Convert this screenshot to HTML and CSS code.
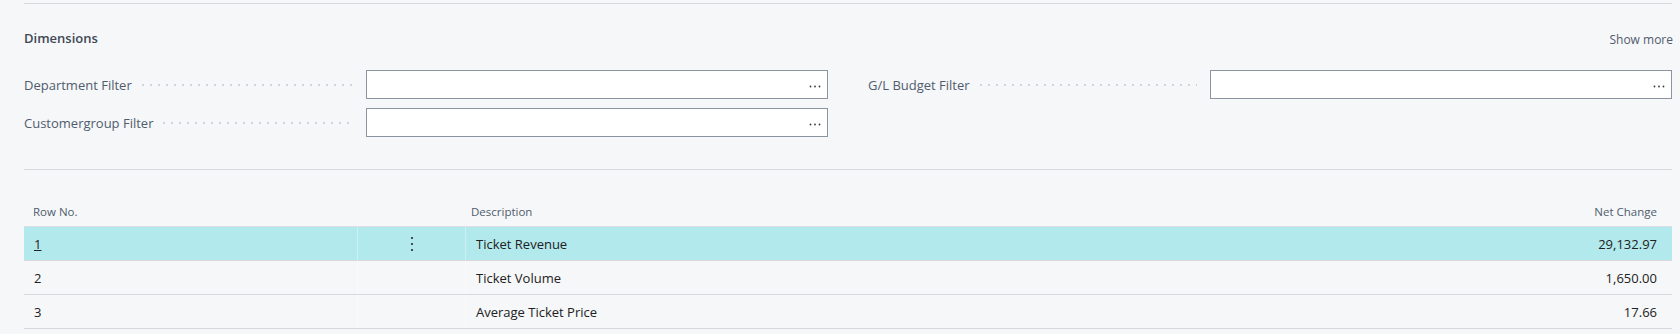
FILE: index.html
```html
<!DOCTYPE html>
<html lang="en">
	<head>
		<meta charset="UTF-8" />
		<meta name="viewport" content="width=device-width, initial-scale=1.0" />
		<title>Account Schedule - Dimensions</title>
		<link rel="stylesheet" href="styles.css">
	</head>
	<body>
		<div class="page">
			<section class="dimensions">
				<div class="section-header">
					<h2 class="section-title">Dimensions</h2>
					<a class="show-more" href="#">Show more</a>
				</div>
				<div class="field-columns">
					<div class="field-column">
						<div class="field">
							<label class="field-label" for="department_filter"><span>Department Filter</span><span class="leader"></span></label>
							<div class="field-input">
								<input type="text" id="department_filter" />
								<span class="lookup"><svg width="12" height="3" viewBox="0 0 12 3"><circle cx="1.5" cy="1.5" r="0.9" /><circle cx="6" cy="1.5" r="0.9" /><circle cx="10.5" cy="1.5" r="0.9" /></svg></span>
							</div>
						</div>
						<div class="field">
							<label class="field-label" for="customergroup_filter"><span>Customergroup Filter</span><span class="leader"></span></label>
							<div class="field-input">
								<input type="text" id="customergroup_filter" />
								<span class="lookup"><svg width="12" height="3" viewBox="0 0 12 3"><circle cx="1.5" cy="1.5" r="0.9" /><circle cx="6" cy="1.5" r="0.9" /><circle cx="10.5" cy="1.5" r="0.9" /></svg></span>
							</div>
						</div>
					</div>
					<div class="field-column">
						<div class="field">
							<label class="field-label" for="budget_filter"><span>G/L Budget Filter</span><span class="leader"></span></label>
							<div class="field-input">
								<input type="text" id="budget_filter" />
								<span class="lookup"><svg width="12" height="3" viewBox="0 0 12 3"><circle cx="1.5" cy="1.5" r="0.9" /><circle cx="6" cy="1.5" r="0.9" /><circle cx="10.5" cy="1.5" r="0.9" /></svg></span>
							</div>
						</div>
					</div>
				</div>
			</section>

			<section class="schedule-lines">
				<div class="grid-row grid-head">
					<div class="cell cell-no">Row No.</div>
					<div class="cell cell-menu"></div>
					<div class="cell cell-desc">Description</div>
					<div class="cell cell-amount">Net Change</div>
				</div>
				<div class="grid-row selected">
					<div class="cell cell-no"><a href="#" class="row-link">1</a></div>
					<div class="cell cell-menu"><svg width="4" height="16" viewBox="0 0 4 16"><circle cx="2" cy="2" r="1.1" /><circle cx="2" cy="8" r="1.1" /><circle cx="2" cy="14" r="1.1" /></svg></div>
					<div class="cell cell-desc">Ticket Revenue</div>
					<div class="cell cell-amount">29,132.97</div>
				</div>
				<div class="grid-row">
					<div class="cell cell-no">2</div>
					<div class="cell cell-menu"></div>
					<div class="cell cell-desc">Ticket Volume</div>
					<div class="cell cell-amount">1,650.00</div>
				</div>
				<div class="grid-row">
					<div class="cell cell-no">3</div>
					<div class="cell cell-menu"></div>
					<div class="cell cell-desc">Average Ticket Price</div>
					<div class="cell cell-amount">17.66</div>
				</div>
			</section>
		</div>
	</body>
</html>
```

FILE: styles.css
```css
body {
	margin: 0;
	background-color: #f6f7f9;
	font-family: "Open Sans", "Noto Sans", sans-serif;
	font-size: 13px;
	color: #505c6d;
}

.page {
	padding: 3px 8px 0 24px;
}

.dimensions {
	border-top: 1px solid #d6d8dc;
	border-bottom: 1px solid #d6d8dc;
	padding: 24px 0 32px;
}

.section-header {
	display: flex;
	justify-content: space-between;
	align-items: baseline;
	height: 20px;
	line-height: 20px;
}
.section-title {
	margin: 0;
	font-size: 13px;
	font-weight: 600;
	color: #3f4854;
}
.show-more {
	font-size: 12px;
	color: #505c6d;
	text-decoration: none;
	position: relative;
	top: 1px;
	right: -1px;
}

.field-columns {
	display: grid;
	grid-template-columns: 1fr 1fr;
	column-gap: 40px;
	margin-top: 22px;
}
.field-column {
	display: flex;
	flex-direction: column;
	gap: 9px;
}
.field {
	display: grid;
	grid-template-columns: 342px 1fr;
	align-items: center;
	height: 29px;
}
.field-label {
	display: flex;
	align-items: center;
	white-space: nowrap;
	line-height: 18px;
}
.field-label .leader {
	flex: 1;
	height: 2px;
	margin: 1px 13px 0 10px;
	background-image: linear-gradient(to right, #d0d3d8 2px, transparent 2px);
	background-size: 8px 2px;
	background-repeat: repeat-x;
}
.field-input {
	position: relative;
	height: 29px;
}
.field-input input {
	box-sizing: border-box;
	width: 100%;
	height: 29px;
	margin: 0;
	border: 1px solid #8a95a1;
	border-radius: 0;
	background: #fff;
	padding: 0 28px 0 8px;
	font: inherit;
	color: #212121;
	outline: none;
}
.field-input .lookup {
	position: absolute;
	right: 7px;
	top: 13px;
	line-height: 0;
	fill: #3a3a3a;
}

.schedule-lines {
	margin-top: 26px;
}
.grid-row {
	display: grid;
	grid-template-columns: 334px 108px 1fr 220px;
	height: 33px;
	border-bottom: 1px solid #d6d8dc;
	color: #212121;
}
.grid-row.grid-head {
	height: 30px;
	color: #505c6d;
	font-size: 11.5px;
	border-bottom-color: #dcdee2;
}
.grid-row.selected {
	background-color: #b2e9ec;
}
.cell {
	display: flex;
	align-items: center;
	padding: 0 10px;
	white-space: nowrap;
}
.cell-no,
.cell-menu {
	border-right: 1px solid rgba(255, 255, 255, 0.35);
}
.grid-head .cell-no,
.grid-head .cell-menu {
	border-right-color: transparent;
}
.grid-head .cell-no {
	padding-left: 9px;
}
.grid-head .cell-desc {
	padding-left: 5px;
}
.cell-menu {
	justify-content: center;
	fill: #2b2b2b;
}
.cell-amount {
	justify-content: flex-end;
	padding-right: 15px;
}
.row-link {
	color: #212121;
	text-decoration: underline;
}
```
